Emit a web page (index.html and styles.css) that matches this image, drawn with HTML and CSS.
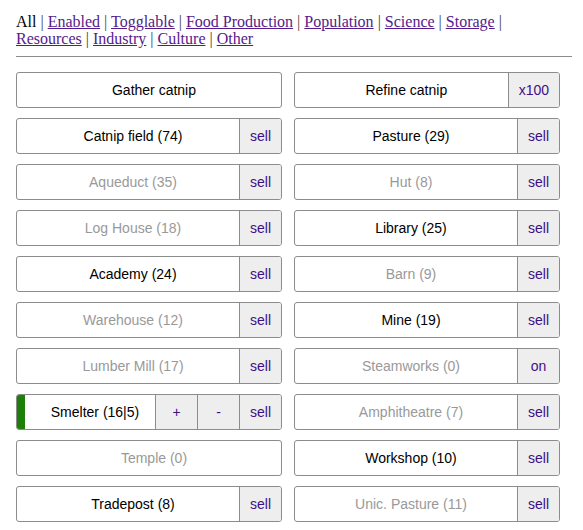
FILE: index.html
```html
<!DOCTYPE html>
<html>
<head>
<meta charset="utf-8">
<link rel="stylesheet" href="styles.css">
</head>
<body>
<div class="page">
  <div class="tabs">
    <span class="tab-active">All</span> <span class="sep">|</span>
    <a href="#">Enabled</a> <span class="sep">|</span>
    <a href="#">Togglable</a> <span class="sep">|</span>
    <a href="#">Food Production</a> <span class="sep">|</span>
    <a href="#">Population</a> <span class="sep">|</span>
    <a href="#">Science</a> <span class="sep">|</span>
    <a href="#">Storage</a> <span class="sep">|</span>
    <a href="#">Resources</a> <span class="sep">|</span>
    <a href="#">Industry</a> <span class="sep">|</span>
    <a href="#">Culture</a> <span class="sep">|</span>
    <a href="#">Other</a>
  </div>
  <hr class="divider">
  <div class="grid">
    <div class="btn"><span class="label">Gather catnip</span></div>
    <div class="btn"><span class="label">Refine catnip</span><span class="link">x100</span></div>

    <div class="btn"><span class="label">Catnip field (74)</span><span class="link">sell</span></div>
    <div class="btn"><span class="label">Pasture (29)</span><span class="link">sell</span></div>

    <div class="btn disabled"><span class="label">Aqueduct (35)</span><span class="link">sell</span></div>
    <div class="btn disabled"><span class="label">Hut (8)</span><span class="link">sell</span></div>

    <div class="btn disabled"><span class="label">Log House (18)</span><span class="link">sell</span></div>
    <div class="btn"><span class="label">Library (25)</span><span class="link">sell</span></div>

    <div class="btn"><span class="label">Academy (24)</span><span class="link">sell</span></div>
    <div class="btn disabled"><span class="label">Barn (9)</span><span class="link">sell</span></div>

    <div class="btn disabled"><span class="label">Warehouse (12)</span><span class="link">sell</span></div>
    <div class="btn"><span class="label">Mine (19)</span><span class="link">sell</span></div>

    <div class="btn disabled"><span class="label">Lumber Mill (17)</span><span class="link">sell</span></div>
    <div class="btn disabled"><span class="label">Steamworks (0)</span><span class="link">on</span></div>

    <div class="btn"><span class="bar"></span><span class="label">Smelter (16|5)</span><span class="link">+</span><span class="link">-</span><span class="link">sell</span></div>
    <div class="btn disabled"><span class="label">Amphitheatre (7)</span><span class="link">sell</span></div>

    <div class="btn disabled"><span class="label">Temple (0)</span></div>
    <div class="btn"><span class="label">Workshop (10)</span><span class="link">sell</span></div>

    <div class="btn"><span class="label">Tradepost (8)</span><span class="link">sell</span></div>
    <div class="btn disabled"><span class="label">Unic. Pasture (11)</span><span class="link">sell</span></div>
  </div>
</div>
</body>
</html>
```
FILE: styles.css
```css
html, body {
  margin: 0;
  padding: 0;
  background: #ffffff;
}

.page {
  padding: 13px 11px 0 16px;
}

.tabs {
  max-width: 540px;
  font-family: "Liberation Serif", "Times New Roman", serif;
  font-size: 16px;
  line-height: 17px;
  color: #000;
}

.tabs a {
  color: #551a8b;
  text-decoration: underline;
}

.tabs .sep {
  color: #444;
}

.divider {
  border: 0;
  border-top: 1px solid #8c8c8c;
  margin: 9px 0 15px 0;
  height: 0;
}

.grid {
  display: grid;
  grid-template-columns: 266px 266px;
  column-gap: 12px;
  row-gap: 10px;
}

.btn {
  display: flex;
  align-items: stretch;
  height: 36px;
  box-sizing: border-box;
  border: 1px solid #8c8c8c;
  border-radius: 3px;
  overflow: hidden;
  font-family: "Liberation Sans", Arial, sans-serif;
  font-size: 14px;
  color: #000;
  background: #fff;
}

.btn.disabled .label {
  color: #999;
}

.label {
  flex: 1;
  display: flex;
  align-items: center;
  justify-content: center;
  padding-left: 10px;
  white-space: nowrap;
}

.bar {
  width: 8px;
  background: #1e7f08;
}

.link {
  display: flex;
  align-items: center;
  justify-content: center;
  box-sizing: border-box;
  min-width: 42px;
  padding: 0 10px;
  border-left: 1px solid #8c8c8c;
  background: #eeeeee;
  color: #3f0f86;
}
```
